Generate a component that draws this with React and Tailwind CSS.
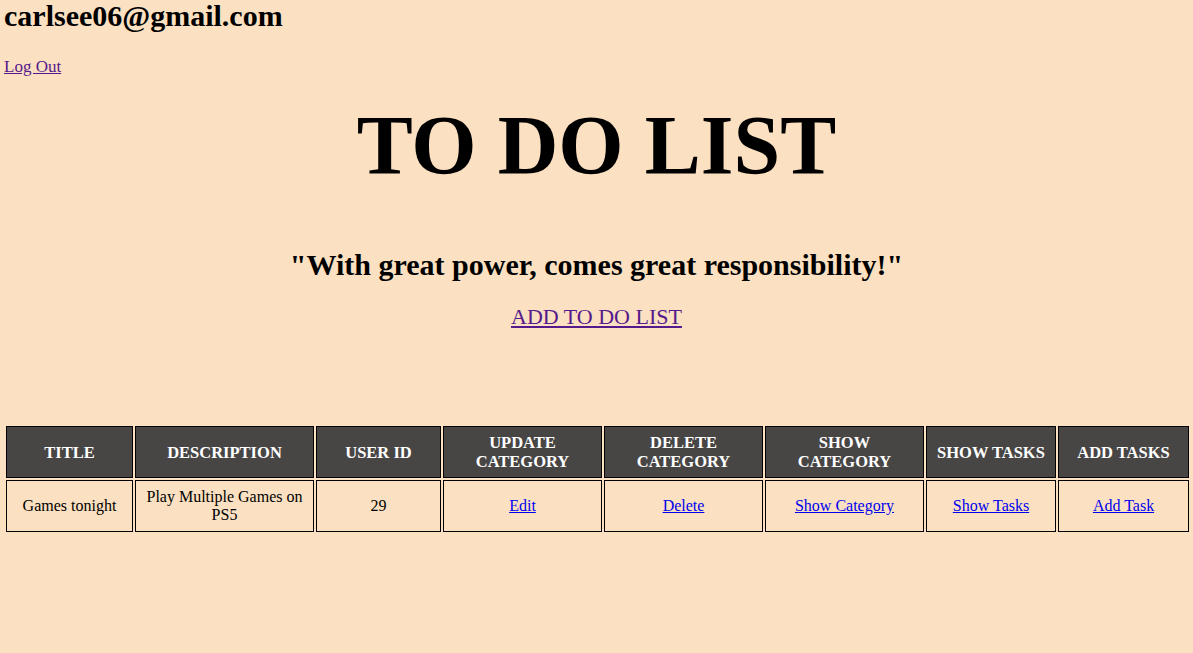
export default function App() {
  const th = 'border border-black bg-[#474645] text-white font-bold text-[16.5px] leading-[19px] px-1 text-center';
  const td = 'border border-black text-[16px] leading-[18px] px-1 text-center';
  const link = 'text-[#0000ee] underline';
  return (
    <div className="min-h-screen bg-[#fbe0c1] text-black font-['Liberation_Serif',serif] px-1">
      <h1 className="text-[30px] font-bold leading-[32px] pt-0">carlsee06@gmail.com</h1>
      <a href="#" className="block mt-[26px] text-[17px] text-[#551a8b] underline leading-[18px]">Log Out</a>

      <h2 className="text-center text-[84px] font-bold leading-[100px] mt-[20px]">TO DO LIST</h2>
      <p className="text-center text-[30px] font-bold mt-[52px] leading-[34px]">
        "With great power, comes great responsibility!"
      </p>
      <div className="text-center mt-[18px]">
        <a href="#" className="text-[22px] text-[#551a8b] underline">ADD TO DO LIST</a>
      </div>

      <table className="mt-[91px] border-separate border-spacing-[2px] w-[1185px] table-fixed">
        <colgroup>
          <col className="w-[127px]" />
          <col className="w-[179px]" />
          <col className="w-[125px]" />
          <col className="w-[159px]" />
          <col className="w-[159px]" />
          <col className="w-[159px]" />
          <col className="w-[130px]" />
          <col className="w-[131px]" />
        </colgroup>
        <thead>
          <tr className="h-[52px]">
            <th className={th}>TITLE</th>
            <th className={th}>DESCRIPTION</th>
            <th className={th}>USER ID</th>
            <th className={th}>UPDATE<br />CATEGORY</th>
            <th className={th}>DELETE<br />CATEGORY</th>
            <th className={th}>SHOW<br />CATEGORY</th>
            <th className={th}>SHOW TASKS</th>
            <th className={th}>ADD TASKS</th>
          </tr>
        </thead>
        <tbody>
          <tr className="h-[52px]">
            <td className={td}>Games tonight</td>
            <td className={td}>Play Multiple Games on PS5</td>
            <td className={td}>29</td>
            <td className={td}><a href="#" className={link}>Edit</a></td>
            <td className={td}><a href="#" className={link}>Delete</a></td>
            <td className={td}><a href="#" className={link}>Show Category</a></td>
            <td className={td}><a href="#" className={link}>Show Tasks</a></td>
            <td className={td}><a href="#" className={link}>Add Task</a></td>
          </tr>
        </tbody>
      </table>
    </div>
  );
}
